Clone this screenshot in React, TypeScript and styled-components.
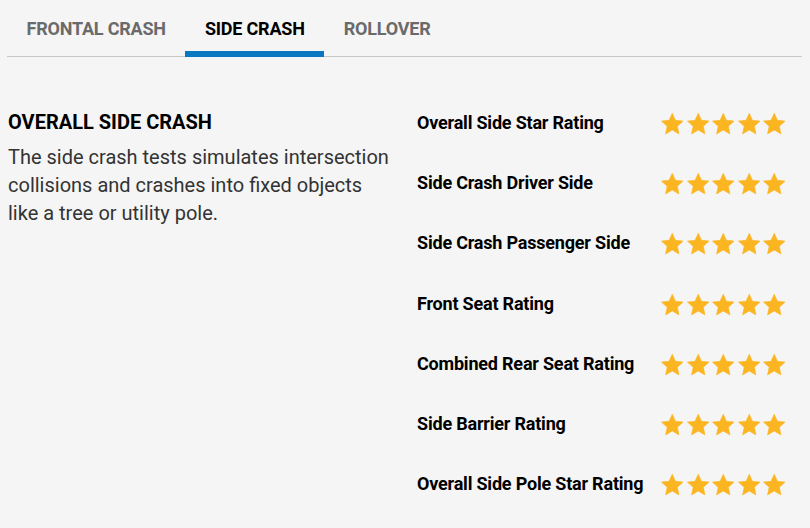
import React from "react";
import styled, { createGlobalStyle } from "styled-components";

const Global = createGlobalStyle`
  html, body { margin: 0; padding: 0; background: #f5f5f5; }
  body { font-family: Roboto, "Liberation Sans", Arial, sans-serif; color: #111; }
`;

const Page = styled.div`
  width: 810px;
  height: 528px;
  box-sizing: border-box;
  padding: 0 8px 0 7px;
  overflow: hidden;
`;

const TabBar = styled.div`
  display: flex;
  height: 57px;
  border-bottom: 1px solid #c8c8c8;
  box-sizing: border-box;
`;

const Tab = styled.div<{ $active?: boolean }>`
  position: relative;
  padding: 0 19.5px;
  display: flex;
  align-items: center;
  height: 56px;
  font-size: 18px;
  font-weight: 700;
  letter-spacing: -0.2px;
  color: ${(p) => (p.$active ? "#000" : "#6a6a6a")};
  &::after {
    content: "";
    display: ${(p) => (p.$active ? "block" : "none")};
    position: absolute;
    left: 0;
    right: 0;
    bottom: -1px;
    height: 6px;
    background: #0a78c0;
  }
`;

const Content = styled.div`
  display: grid;
  grid-template-columns: 410px 1fr;
  padding-top: 53px;
`;

const Intro = styled.div`
  padding-left: 1px;
`;

const Heading = styled.h2`
  margin: 0 0 9px;
  font-size: 20px;
  font-weight: 700;
  line-height: 24px;
  color: #000;
`;

const Text = styled.p`
  margin: 0;
  font-size: 20px;
  line-height: 28px;
  color: #333;
  width: 384px;
`;

const Ratings = styled.div`
  display: flex;
  flex-direction: column;
`;

const Row = styled.div`
  display: grid;
  grid-template-columns: 243px auto;
  align-items: center;
  height: 60.3px;
  margin-top: -18px;
  margin-bottom: 18px;
`;

const Label = styled.div`
  font-size: 18px;
  font-weight: 700;
  color: #000;
  letter-spacing: -0.2px;
`;

const Stars = styled.div`
  display: flex;
  gap: 1px;
  padding-top: 3px;
`;

const Star = () => (
  <svg width="24.5" height="24" viewBox="0 0 24 24">
    <path
      d="M12 1.2l3.2 7.1 7.6.8-5.7 5.2 1.6 7.6L12 18l-6.7 3.9 1.6-7.6-5.7-5.2 7.6-.8z"
      fill="#fbb520"
      stroke="#fbb520"
      strokeWidth="0.6"
      strokeLinejoin="round"
    />
  </svg>
);

const rows = [
  "Overall Side Star Rating",
  "Side Crash Driver Side",
  "Side Crash Passenger Side",
  "Front Seat Rating",
  "Combined Rear Seat Rating",
  "Side Barrier Rating",
  "Overall Side Pole Star Rating",
];

export default function App() {
  return (
    <Page>
      <Global />
      <TabBar>
        <Tab>FRONTAL CRASH</Tab>
        <Tab $active>SIDE CRASH</Tab>
        <Tab>ROLLOVER</Tab>
      </TabBar>
      <Content>
        <Intro>
          <Heading>OVERALL SIDE CRASH</Heading>
          <Text>
            The side crash tests simulates intersection collisions and crashes
            into fixed objects like a tree or utility pole.
          </Text>
        </Intro>
        <Ratings>
          {rows.map((r) => (
            <Row key={r}>
              <Label>{r}</Label>
              <Stars>
                {[0, 1, 2, 3, 4].map((i) => (
                  <Star key={i} />
                ))}
              </Stars>
            </Row>
          ))}
        </Ratings>
      </Content>
    </Page>
  );
}
